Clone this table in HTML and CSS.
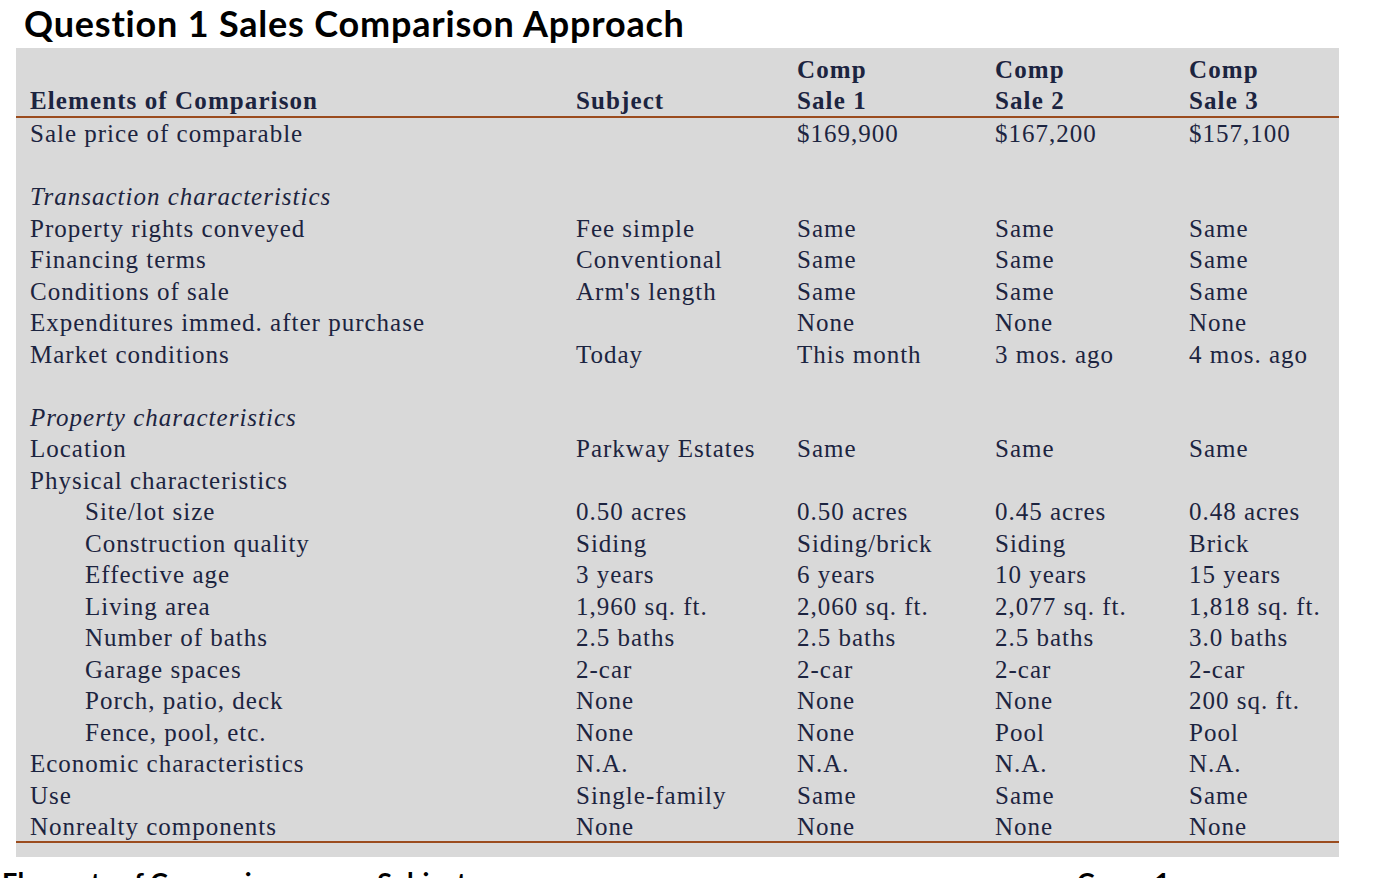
FILE: index.html
```html
<!DOCTYPE html>
<html lang="en">
<head>
<meta charset="utf-8">
<title>Question 1 Sales Comparison Approach</title>
<link rel="stylesheet" href="styles.css">
</head>
<body>
<h1 class="title">Question 1 Sales Comparison Approach</h1>
<div class="sheet">
  <div class="row head">
    <div class="c1"><span class="hl"></span><span class="hl">Elements of Comparison</span></div>
    <div class="c2"><span class="hl"></span><span class="hl">Subject</span></div>
    <div class="c3"><span class="hl">Comp</span><span class="hl">Sale 1</span></div>
    <div class="c4"><span class="hl">Comp</span><span class="hl">Sale 2</span></div>
    <div class="c5"><span class="hl">Comp</span><span class="hl">Sale 3</span></div>
  </div>
  <div class="body">
    <div class="row"><div>Sale price of comparable</div><div></div><div>$169,900</div><div>$167,200</div><div>$157,100</div></div>
    <div class="row blank"></div>
    <div class="row"><div class="section">Transaction characteristics</div><div></div><div></div><div></div><div></div></div>
    <div class="row"><div>Property rights conveyed</div><div>Fee simple</div><div>Same</div><div>Same</div><div>Same</div></div>
    <div class="row"><div>Financing terms</div><div>Conventional</div><div>Same</div><div>Same</div><div>Same</div></div>
    <div class="row"><div>Conditions of sale</div><div>Arm's length</div><div>Same</div><div>Same</div><div>Same</div></div>
    <div class="row"><div>Expenditures immed. after purchase</div><div></div><div>None</div><div>None</div><div>None</div></div>
    <div class="row"><div>Market conditions</div><div>Today</div><div>This month</div><div>3 mos. ago</div><div>4 mos. ago</div></div>
    <div class="row blank"></div>
    <div class="row"><div class="section">Property characteristics</div><div></div><div></div><div></div><div></div></div>
    <div class="row"><div>Location</div><div>Parkway Estates</div><div>Same</div><div>Same</div><div>Same</div></div>
    <div class="row"><div>Physical characteristics</div><div></div><div></div><div></div><div></div></div>
    <div class="row"><div class="sub">Site/lot size</div><div>0.50 acres</div><div>0.50 acres</div><div>0.45 acres</div><div>0.48 acres</div></div>
    <div class="row"><div class="sub">Construction quality</div><div>Siding</div><div>Siding/brick</div><div>Siding</div><div>Brick</div></div>
    <div class="row"><div class="sub">Effective age</div><div>3 years</div><div>6 years</div><div>10 years</div><div>15 years</div></div>
    <div class="row"><div class="sub">Living area</div><div>1,960 sq. ft.</div><div>2,060 sq. ft.</div><div>2,077 sq. ft.</div><div>1,818 sq. ft.</div></div>
    <div class="row"><div class="sub">Number of baths</div><div>2.5 baths</div><div>2.5 baths</div><div>2.5 baths</div><div>3.0 baths</div></div>
    <div class="row"><div class="sub">Garage spaces</div><div>2-car</div><div>2-car</div><div>2-car</div><div>2-car</div></div>
    <div class="row"><div class="sub">Porch, patio, deck</div><div>None</div><div>None</div><div>None</div><div>200 sq. ft.</div></div>
    <div class="row"><div class="sub">Fence, pool, etc.</div><div>None</div><div>None</div><div>Pool</div><div>Pool</div></div>
    <div class="row"><div>Economic characteristics</div><div>N.A.</div><div>N.A.</div><div>N.A.</div><div>N.A.</div></div>
    <div class="row"><div>Use</div><div>Single-family</div><div>Same</div><div>Same</div><div>Same</div></div>
    <div class="row last"><div>Nonrealty components</div><div>None</div><div>None</div><div>None</div><div>None</div></div>
  </div>
  <div class="foot"></div>
</div>
<div class="next">
  <span class="n1">Elements of Comparison</span>
  <span class="n2">Subject</span>
  <span class="n3">Comp 1</span>
</div>
</body>
</html>
```

FILE: styles.css
```css
html, body {
  margin: 0;
  padding: 0;
  background: #ffffff;
  overflow: hidden;
}

body {
  width: 1380px;
  height: 878px;
}

.title {
  margin: 0;
  height: 48px;
  padding-left: 24px;
  font-family: Lato, "Liberation Sans", sans-serif;
  font-weight: 700;
  font-size: 36px;
  letter-spacing: 0.8px;
  line-height: 46px;
  color: #000000;
  white-space: nowrap;
}

.sheet {
  margin-left: 16px;
  width: 1323px;
  background: #d9d9d9;
  font-family: "Liberation Serif", "Times New Roman", serif;
  font-size: 25px;
  letter-spacing: 1px;
  color: #1c2440;
}

.row {
  display: grid;
  grid-template-columns: 546px 221px 198px 194px 150px;
  padding-left: 14px;
  height: 31.5px;
  line-height: 31.5px;
  white-space: nowrap;
}

.row.last {
  height: 29.5px;
}

.head {
  height: 62px;
  padding-top: 6px;
  font-weight: 700;
  letter-spacing: 1.1px;
  border-bottom: 2px solid #9b4c1e;
}

.head > div {
  display: flex;
  flex-direction: column;
}

.hl {
  display: block;
  height: 31px;
  line-height: 31.5px;
}

.section {
  font-style: italic;
}

.sub {
  padding-left: 55px;
}

.body {
  border-bottom: 2px solid #9b4c1e;
}

.foot {
  height: 14px;
}

.next {
  display: flex;
  margin-top: 7.5px;
  font-family: Lato, "Liberation Sans", sans-serif;
  font-weight: 700;
  font-size: 27px;
  line-height: 36px;
  color: #000000;
  white-space: nowrap;
}

.n1 {
  margin-left: 2px;
}

.n2 {
  margin-left: 83px;
}

.n3 {
  margin-left: 610px;
}
```
